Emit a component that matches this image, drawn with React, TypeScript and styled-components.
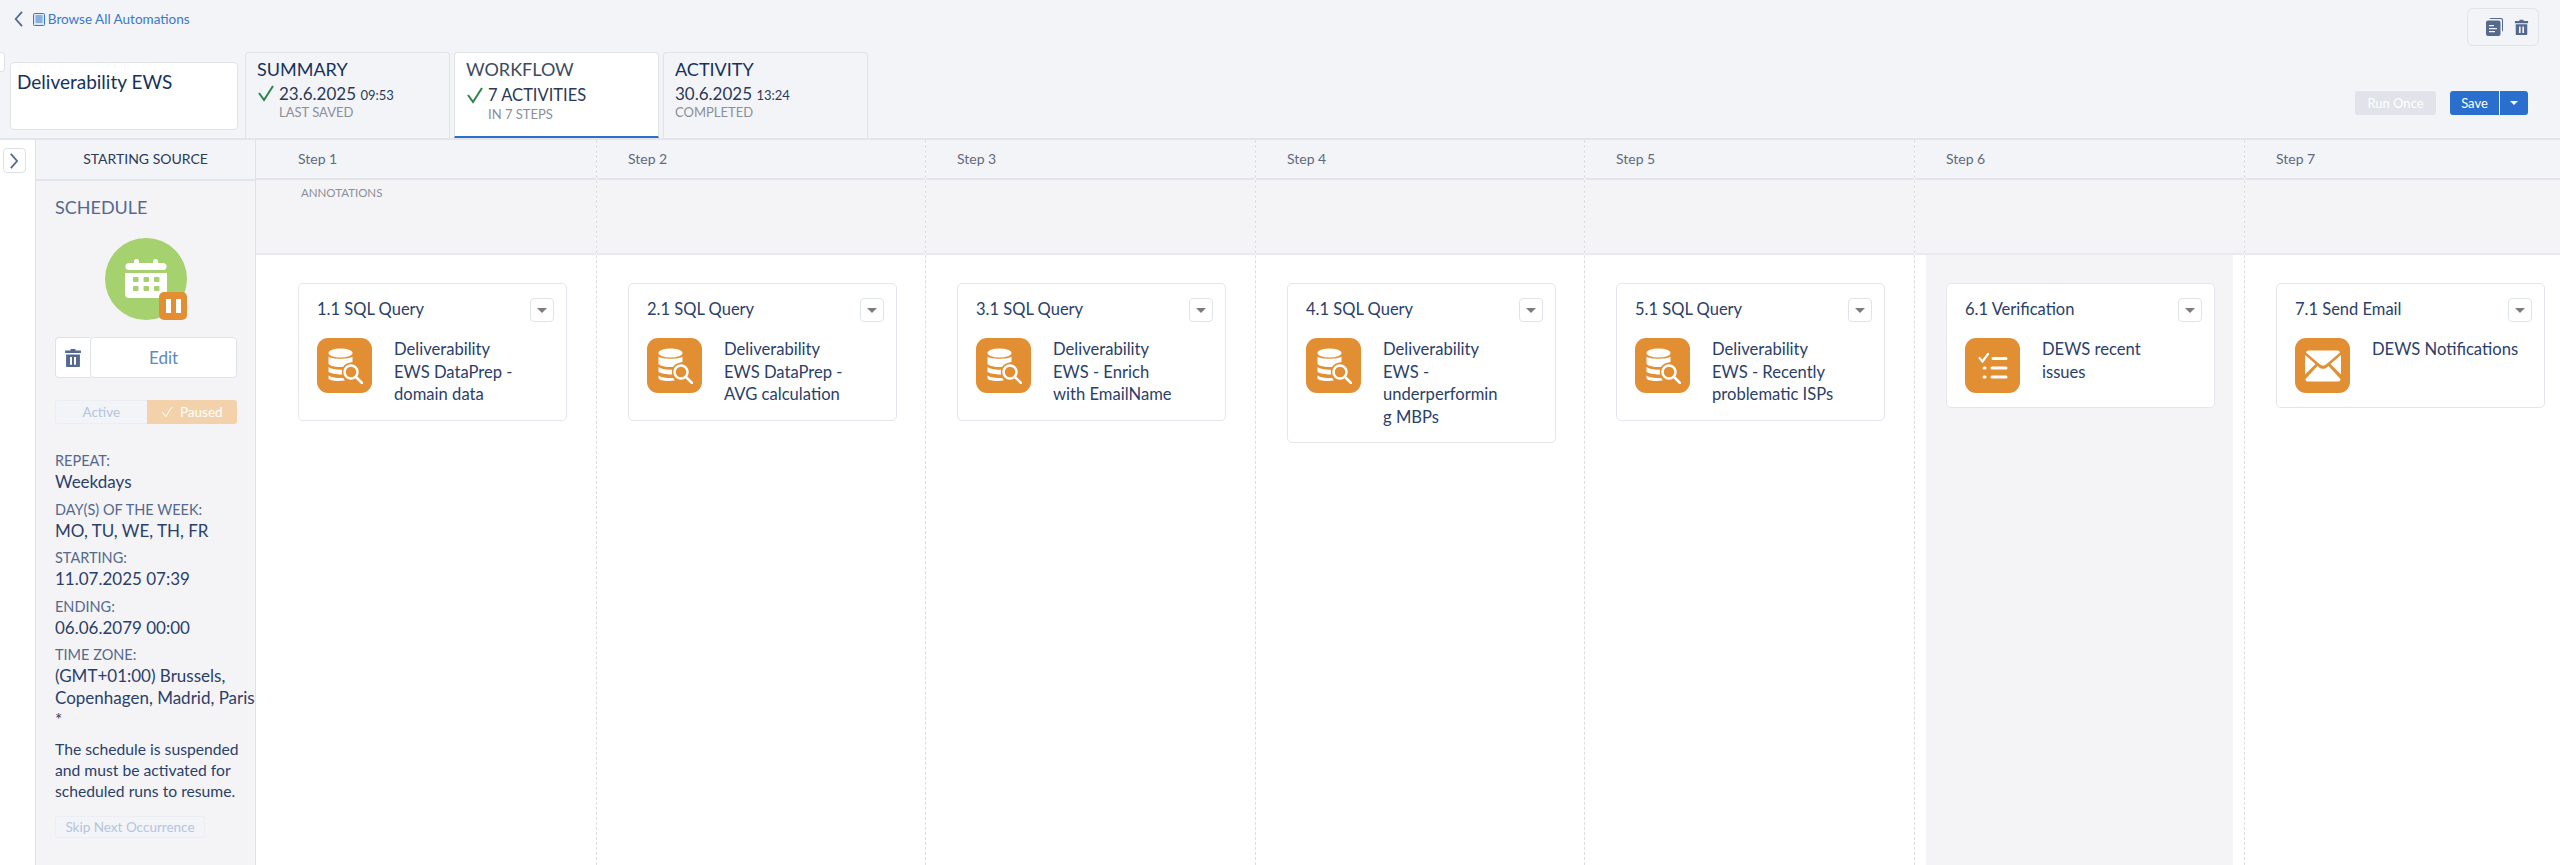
import React from 'react';
import styled, { createGlobalStyle } from 'styled-components';

const colors = {
   navy: '#16325c',
   slate: '#54698d',
   muted: '#8a8f99',
   line: '#dfe1e6',
   pageBg: '#f3f4f8',
   panelBg: '#f4f4f6',
   blue: '#2a6fce',
   orange: '#e28f33',
   link: '#3a78c9',
};

const GlobalStyle = createGlobalStyle`
   html, body {
      margin: 0;
      padding: 0;
      background: #fff;
   }
   * {
      box-sizing: border-box;
   }
   body {
      font-family: 'Lato', 'Open Sans', sans-serif;
      color: ${colors.navy};
   }
`;

/* icons */
const Chevron = ({ dir, size = 20 }: { dir: 'left' | 'right'; size?: number }) => (
   <svg width={size * 0.6} height={size} viewBox="0 0 12 20" fill="none" stroke={colors.slate} strokeWidth="2">
      <path d={dir === 'left' ? 'M10 2 3 10l7 8' : 'M2 2l7 8-7 8'} />
   </svg>
);

const ListBook = () => (
   <svg width="12" height="13" viewBox="0 0 12 13">
      <rect x="0.5" y="0.5" width="11" height="12" fill="#dce8f7" stroke={colors.link} rx="1" />
      <path d="M2.500 3h7M2.500 5h7M2.500 7h7M2.500 9h7" stroke={colors.link} strokeWidth="1" />
   </svg>
);

const Check = ({ size = 18, color = '#2e844a', width = 2 }: { size?: number; color?: string; width?: number }) => (
   <svg width={size} height={size} viewBox="0 0 18 18" fill="none" stroke={color} strokeWidth={width}>
      <path d="M2 9l5 7L16 2" />
   </svg>
);

const Trash = ({ size = 18 }: { size?: number }) => (
   <svg width={size} height={size * 1.1} viewBox="0 0 18 20">
      <path d="M6.500 2.500V1h5v1.500H17V5H1V2.500z" fill={colors.slate} />
      <path
         fillRule="evenodd"
         d="M2 6.500h14V18a2 2 0 0 1-2 2H4a2 2 0 0 1-2-2zM6 9v8h2V9zm4 0v8h2V9z"
         fill={colors.slate}
      />
   </svg>
);

const Copy = () => (
   <svg width="17" height="18" viewBox="0 0 17 18">
      <path d="M5 0h10a2 2 0 0 1 2 2v10a2 2 0 0 1-1 1.700V2.500A1.500 1.500 0 0 0 14.500 1H3.300A2 2 0 0 1 5 0z" fill={colors.slate} />
      <path
         fillRule="evenodd"
         d="M2 2.500h10.500a2 2 0 0 1 2 2V16a2 2 0 0 1-2 2H2a2 2 0 0 1-2-2V4.500a2 2 0 0 1 2-2zM3 7v1.300h5V7zm0 3v1.300h8V10zm0 3v1.300h6V13z"
         fill={colors.slate}
      />
   </svg>
);

const Calendar = () => (
   <svg width="42" height="42" viewBox="0 0 42 42">
      <rect x="0.500" y="5" width="41" height="7" rx="3.500" fill="#fff" />
      <rect x="9" y="1" width="5" height="6" rx="2.500" fill="#fff" />
      <rect x="28" y="1" width="5" height="6" rx="2.500" fill="#fff" />
      <path d="M0 15h42v21a4 4 0 0 1-4 4H4a4 4 0 0 1-4-4z" fill="#fff" />
      {[8, 18.500, 29].map((x) =>
         [19, 28].map((y) => <rect key={`${x}-${y}`} x={x} y={y} width="5.500" height="5" rx="1" fill="#a5d16f" />),
      )}
   </svg>
);

const DatabaseSearch = () => (
   <svg width="36" height="36" viewBox="0 0 36 36">
      <ellipse cx="13.500" cy="5" rx="12" ry="4.500" fill="#fff" />
      <path d="M1.500 8.500C4 11.500 23 11.500 25.500 8.500V14c-5 .5-8 2.500-9.500 5-5 .3-12-.5-14.500-3z" fill="#fff" />
      <path d="M1.500 19c3 2.300 8.500 3 13.500 2.700-.3 1.500-.2 3.300.2 4.800-5 .1-11-.5-13.700-2.700z" fill="#fff" />
      <path d="M1.500 27.500c3 2 9 2.700 14.700 2.500.4 1 1 1.800 1.700 2.600C11 33.500 1.500 33 1.500 30z" fill="#fff" />
      <circle cx="24" cy="24" r="6.500" fill="none" stroke="#fff" strokeWidth="2.500" />
      <path d="M29 29l6 6" stroke="#fff" strokeWidth="2.500" strokeLinecap="round" />
   </svg>
);

const Checklist = () => (
   <svg width="30" height="30" viewBox="0 0 30 30" fill="none" stroke="#fff" strokeWidth="3" strokeLinecap="round">
      <path d="M1.500 7l3 3.500L10 3" strokeWidth="2.200" />
      <path d="M15 7.500h13M14 17h14M14 26h14M6 17h1M6 26h1" />
   </svg>
);

const Envelope = () => (
   <svg width="36" height="36" viewBox="0 0 36 36">
      <path d="M3 2.500h30A2.500 2.500 0 0 1 35 4.500L21 16.500c-1.800 1.500-4.200 1.500-6 0L1 4.500a2.500 2.500 0 0 1 2-2z" fill="#fff" />
      <path d="M0 7l10.500 9L0 26.500zM36 7v19.500L25.500 16z" fill="#fff" />
      <path d="M12.500 18l1.500 1.200c2.400 2 5.600 2 8 0l1.500-1.200L35.500 31a2.500 2.500 0 0 1-2.500 2.500H3A2.500 2.500 0 0 1 .5 31z" fill="#fff" />
   </svg>
);

/* top bar */
const Page = styled.div`
   width: 2560px;
   height: 865px;
   overflow: hidden;
   display: flex;
   flex-direction: column;
   background: #fff;
`;

const TopBar = styled.header`
   position: relative;
   height: 140px;
   flex: none;
   background: ${colors.pageBg};
   border-bottom: 2px solid #e4e5ea;
`;

const SideStub = styled.div`
   position: absolute;
   left: -3px;
   top: 52px;
   width: 8px;
   height: 20px;
   background: #fff;
   border: 1px solid ${colors.line};
   border-radius: 3px;
`;

const TopRow = styled.div`
   height: 52px;
   padding: 8px 21px 0 13px;
   display: flex;
   justify-content: space-between;
   align-items: flex-start;
`;

const BackLink = styled.a`
   display: flex;
   align-items: center;
   gap: 9px;
   height: 22px;
   font-size: 13.500px;
   color: ${colors.link};
   span {
      display: flex;
      align-items: center;
      gap: 3px;
   }
`;

const IconGroup = styled.div`
   width: 72px;
   height: 38px;
   border: 1px solid #e2e3e8;
   border-radius: 6px;
   padding-left: 18px;
   display: flex;
   align-items: center;
   gap: 11px;
`;

const TabRow = styled.div`
   display: flex;
   align-items: flex-start;
   padding-left: 10px;
`;

const NameBox = styled.div`
   width: 228px;
   height: 68px;
   margin: 10px 7px 0 0;
   padding: 5px 6px;
   background: #fff;
   border: 1px solid #e0e2e8;
   border-radius: 4px;
   font-size: 19px;
   line-height: 28px;
`;

const Tab = styled.div<{ $active?: boolean }>`
   width: 205px;
   height: 86px;
   margin-right: 4px;
   padding: 4px 11px 0;
   background: ${(p) => (p.$active ? '#fff' : colors.pageBg)};
   border: 1px solid #e0e2e8;
   border-bottom: ${(p) => (p.$active ? `2px solid ${colors.blue}` : 'none')};
   border-radius: 4px 4px 0 0;
`;

const TabTitle = styled.div<{ $active?: boolean }>`
   font-size: 18px;
   line-height: 24px;
   color: ${(p) => (p.$active ? '#3e4a5e' : colors.navy)};
`;

const TabMain = styled.div<{ $low?: boolean }>`
   display: flex;
   align-items: center;
   gap: 4px;
   height: 22px;
   margin-top: ${(p) => (p.$low ? '3px' : '1px')};
   font-size: ${(p) => (p.$low ? '16.500px' : '17px')};
   color: #2b3a55;
   small {
      font-size: 13px;
   }
`;

const TabSub = styled.div<{ $indent?: boolean }>`
   margin-left: ${(p) => (p.$indent ? '22px' : '0')};
   font-size: 13px;
   line-height: 17px;
   color: ${colors.muted};
`;

const Actions = styled.div`
   position: absolute;
   right: 32px;
   top: 91px;
   display: flex;
   align-items: center;
   gap: 14px;
`;

const RunOnce = styled.div`
   width: 81px;
   height: 24px;
   border-radius: 3px;
   background: #e0e3ea;
   color: #fff;
   font-size: 13px;
   line-height: 24px;
   text-align: center;
`;

const SaveGroup = styled.div`
   display: flex;
   height: 24px;
   border-radius: 3px;
   overflow: hidden;
   background: ${colors.blue};
   color: #fff;
   font-size: 13px;
   line-height: 24px;
`;

const SaveLabel = styled.div`
   width: 50px;
   text-align: center;
   border-right: 1px solid #fff;
`;

const SaveCaret = styled.div`
   width: 28px;
   display: flex;
   align-items: center;
   justify-content: center;
   &::after {
      content: '';
      border: 4px solid transparent;
      border-top: 4px solid #fff;
      border-bottom: 0;
   }
`;

/* body */
const Body = styled.main`
   flex: 1;
   display: flex;
   min-height: 0;
`;

const Rail = styled.div`
   width: 36px;
   flex: none;
   padding: 8px 3px;
   border-right: 1px solid ${colors.line};
`;

const ExpandButton = styled.div`
   width: 23px;
   height: 25px;
   display: flex;
   align-items: center;
   justify-content: center;
   border: 1px solid ${colors.line};
   border-radius: 4px;
`;

const Source = styled.aside`
   width: 220px;
   flex: none;
   background: ${colors.panelBg};
   border-right: 1px solid ${colors.line};
`;

const SourceHead = styled.div`
   height: 41px;
   background: ${colors.pageBg};
   border-bottom: 2px solid #e4e5ea;
   font-size: 14px;
   line-height: 38px;
   text-align: center;
   color: #2b3a55;
`;

const SourceBody = styled.div`
   padding: 14px 0 0 19px;
`;

const SourceTitle = styled.div`
   font-size: 18px;
   line-height: 24px;
   color: ${colors.slate};
`;

const ScheduleBadge = styled.div`
   position: relative;
   width: 82px;
   height: 82px;
   margin: 19px 0 17px 50px;
   border-radius: 50%;
   background: #a5d16f;
   display: flex;
   align-items: center;
   justify-content: center;
`;

const PauseBadge = styled.div`
   position: absolute;
   right: 0;
   bottom: 0;
   width: 28px;
   height: 28px;
   border-radius: 5px;
   background: ${colors.orange};
   display: flex;
   align-items: center;
   justify-content: center;
   gap: 5px;
   i {
      display: block;
      width: 5px;
      height: 14px;
      background: #fff;
   }
`;

const EditRow = styled.div`
   display: flex;
   width: 182px;
   height: 41px;
`;

const TrashButton = styled.div`
   width: 35px;
   background: #fff;
   border: 1px solid #e0e2e8;
   border-right: none;
   border-radius: 4px 0 0 4px;
   display: flex;
   align-items: center;
   justify-content: center;
`;

const EditButton = styled.div`
   flex: 1;
   background: #fff;
   border: 1px solid #dfe3ec;
   border-radius: 4px;
   font-size: 17px;
   line-height: 39px;
   text-align: center;
   color: #5a8ac2;
`;

const Toggle = styled.div`
   display: flex;
   width: 182px;
   height: 24px;
   margin: 22px 0 26px;
   font-size: 13.500px;
   line-height: 23px;
   text-align: center;
`;

const ToggleOff = styled.div`
   flex: 1;
   background: ${colors.pageBg};
   border: 1px solid #eceef3;
   border-right: none;
   border-radius: 3px 0 0 3px;
   color: #b4c5df;
`;

const ToggleOn = styled.div`
   flex: 1;
   display: flex;
   align-items: center;
   justify-content: center;
   gap: 7px;
   background: #f3d2ab;
   border-radius: 0 3px 3px 0;
   color: #fff;
`;

const Label = styled.div`
   font-size: 14.500px;
   line-height: 21px;
   color: ${colors.slate};
`;

const Value = styled.div`
   font-size: 17px;
   line-height: 22px;
   color: #2b4069;
   margin-bottom: 5.500px;
   margin-right: -4px;
   white-space: pre-line;
`;

const Notice = styled.div`
   width: 195px;
   margin-top: 8px;
   font-size: 15.700px;
   line-height: 21px;
   color: #2b4069;
`;

const SkipButton = styled.div`
   width: 150px;
   height: 22px;
   margin-top: 14px;
   background: ${colors.pageBg};
   border: 1px solid #eceef3;
   border-radius: 3px;
   font-size: 13.500px;
   line-height: 20px;
   text-align: center;
   color: #b4c5df;
`;

const Steps = styled.div`
   flex: 1;
   display: flex;
   min-width: 0;
`;

const Column = styled.section<{ $width: number; $last?: boolean }>`
   width: ${(p) => p.$width}px;
   flex: none;
   display: flex;
   flex-direction: column;
   ${(p) => (p.$last ? '' : `border-right: 1px dashed #dcdde2;`)}
`;

const StepHead = styled.div<{ $left: number }>`
   height: 40px;
   flex: none;
   padding-left: ${(p) => p.$left}px;
   background: ${colors.pageBg};
   border-bottom: 2px solid #e4e5ea;
   font-size: 14px;
   line-height: 37px;
   color: #5e6a7c;
`;

const AnnotationRow = styled.div`
   height: 75px;
   flex: none;
   padding: 5px 0 0 45px;
   background: ${colors.panelBg};
   border-bottom: 2px solid #e9eaee;
   font-size: 11.500px;
   line-height: 16px;
   color: ${colors.muted};
`;

const Lane = styled.div<{ $left: number; $highlight?: boolean }>`
   flex: 1;
   margin: ${(p) => (p.$highlight ? '0 11px' : '0')};
   padding: 28px 0 0 ${(p) => p.$left}px;
   background: ${(p) => (p.$highlight ? colors.panelBg : '#fff')};
`;

const Card = styled.article`
   width: 269px;
   padding: 13px 12px 14px 18px;
   background: #fff;
   border: 1px solid #e4e6ee;
   border-radius: 5px;
`;

const CardHead = styled.div`
   display: flex;
   justify-content: space-between;
   align-items: flex-start;
   height: 41px;
`;

const CardTitle = styled.div`
   font-size: 16.500px;
   line-height: 24px;
   color: #2b4069;
`;

const MenuButton = styled.div`
   width: 24px;
   height: 24px;
   margin-top: 1px;
   border: 1px solid #dfe3ec;
   border-radius: 4px;
   display: flex;
   align-items: center;
   justify-content: center;
   &::after {
      content: '';
      border: 5px solid transparent;
      border-top: 5px solid #7c7c7c;
      border-bottom: 0;
   }
`;

const CardBody = styled.div`
   display: flex;
   gap: 22px;
`;

const ActivityIcon = styled.div`
   width: 55px;
   height: 55px;
   flex: none;
   border-radius: 11px;
   background: ${colors.orange};
   display: flex;
   align-items: center;
   justify-content: center;
`;

const CardText = styled.div`
   font-size: 16.600px;
   line-height: 22.500px;
   color: #2b4069;
   white-space: pre-line;
`;

type StepType = {
   title: string;
   text: string;
   icon: React.ReactNode;
   width: number;
   highlight?: boolean;
};

const steps: StepType[] = [
   { title: '1.1 SQL Query', text: 'Deliverability\nEWS DataPrep -\ndomain data', icon: <DatabaseSearch />, width: 341 },
   { title: '2.1 SQL Query', text: 'Deliverability\nEWS DataPrep -\nAVG calculation', icon: <DatabaseSearch />, width: 329 },
   { title: '3.1 SQL Query', text: 'Deliverability\nEWS - Enrich\nwith EmailName', icon: <DatabaseSearch />, width: 330 },
   { title: '4.1 SQL Query', text: 'Deliverability\nEWS -\nunderperformin\ng MBPs', icon: <DatabaseSearch />, width: 329 },
   { title: '5.1 SQL Query', text: 'Deliverability\nEWS - Recently\nproblematic ISPs', icon: <DatabaseSearch />, width: 330 },
   { title: '6.1 Verification', text: 'DEWS recent\nissues', icon: <Checklist />, width: 330, highlight: true },
   { title: '7.1 Send Email', text: 'DEWS Notifications', icon: <Envelope />, width: 316 },
];

const scheduleInfo = [
   { label: 'REPEAT:', value: 'Weekdays' },
   { label: 'DAY(S) OF THE WEEK:', value: 'MO, TU, WE, TH, FR' },
   { label: 'STARTING:', value: '11.07.2025 07:39' },
   { label: 'ENDING:', value: '06.06.2079 00:00' },
   { label: 'TIME ZONE:', value: '(GMT+01:00) Brussels,\nCopenhagen, Madrid, Paris\n*' },
];

export default function App() {
   return (
      <Page>
         <GlobalStyle />
         <TopBar>
            <SideStub />
            <TopRow>
               <BackLink>
                  <Chevron dir="left" size={18} />
                  <span>
                     <ListBook /> Browse All Automations
                  </span>
               </BackLink>
               <IconGroup>
                  <Copy />
                  <Trash size={15} />
               </IconGroup>
            </TopRow>
            <TabRow>
               <NameBox>Deliverability EWS</NameBox>
               <Tab>
                  <TabTitle>SUMMARY</TabTitle>
                  <TabMain>
                     <Check />
                     <span>
                        23.6.2025 <small>09:53</small>
                     </span>
                  </TabMain>
                  <TabSub $indent>LAST SAVED</TabSub>
               </Tab>
               <Tab $active>
                  <TabTitle $active>WORKFLOW</TabTitle>
                  <TabMain $low>
                     <Check />
                     <span>7 ACTIVITIES</span>
                  </TabMain>
                  <TabSub $indent>IN 7 STEPS</TabSub>
               </Tab>
               <Tab>
                  <TabTitle>ACTIVITY</TabTitle>
                  <TabMain>
                     <span>
                        30.6.2025 <small>13:24</small>
                     </span>
                  </TabMain>
                  <TabSub>COMPLETED</TabSub>
               </Tab>
            </TabRow>
            <Actions>
               <RunOnce>Run Once</RunOnce>
               <SaveGroup>
                  <SaveLabel>Save</SaveLabel>
                  <SaveCaret />
               </SaveGroup>
            </Actions>
         </TopBar>
         <Body>
            <Rail>
               <ExpandButton>
                  <Chevron dir="right" size={18} />
               </ExpandButton>
            </Rail>
            <Source>
               <SourceHead>STARTING SOURCE</SourceHead>
               <SourceBody>
                  <SourceTitle>SCHEDULE</SourceTitle>
                  <ScheduleBadge>
                     <Calendar />
                     <PauseBadge>
                        <i />
                        <i />
                     </PauseBadge>
                  </ScheduleBadge>
                  <EditRow>
                     <TrashButton>
                        <Trash />
                     </TrashButton>
                     <EditButton>Edit</EditButton>
                  </EditRow>
                  <Toggle>
                     <ToggleOff>Active</ToggleOff>
                     <ToggleOn>
                        <Check size={12} color="#fff" width={1.500} />
                        Paused
                     </ToggleOn>
                  </Toggle>
                  {scheduleInfo.map((item) => (
                     <div key={item.label}>
                        <Label>{item.label}</Label>
                        <Value>{item.value}</Value>
                     </div>
                  ))}
                  <Notice>The schedule is suspended and must be activated for scheduled runs to resume.</Notice>
                  <SkipButton>Skip Next Occurrence</SkipButton>
               </SourceBody>
            </Source>
            <Steps>
               {steps.map((step, i) => {
                  const left = i === 0 ? 42 : 31;
                  return (
                     <Column key={step.title} $width={step.width} $last={i === steps.length - 1}>
                        <StepHead $left={left}>Step {i + 1}</StepHead>
                        <AnnotationRow>{i === 0 ? 'ANNOTATIONS' : ''}</AnnotationRow>
                        <Lane $left={step.highlight ? 20 : left} $highlight={step.highlight}>
                           <Card>
                              <CardHead>
                                 <CardTitle>{step.title}</CardTitle>
                                 <MenuButton />
                              </CardHead>
                              <CardBody>
                                 <ActivityIcon>{step.icon}</ActivityIcon>
                                 <CardText>{step.text}</CardText>
                              </CardBody>
                           </Card>
                        </Lane>
                     </Column>
                  );
               })}
            </Steps>
         </Body>
      </Page>
   );
}
